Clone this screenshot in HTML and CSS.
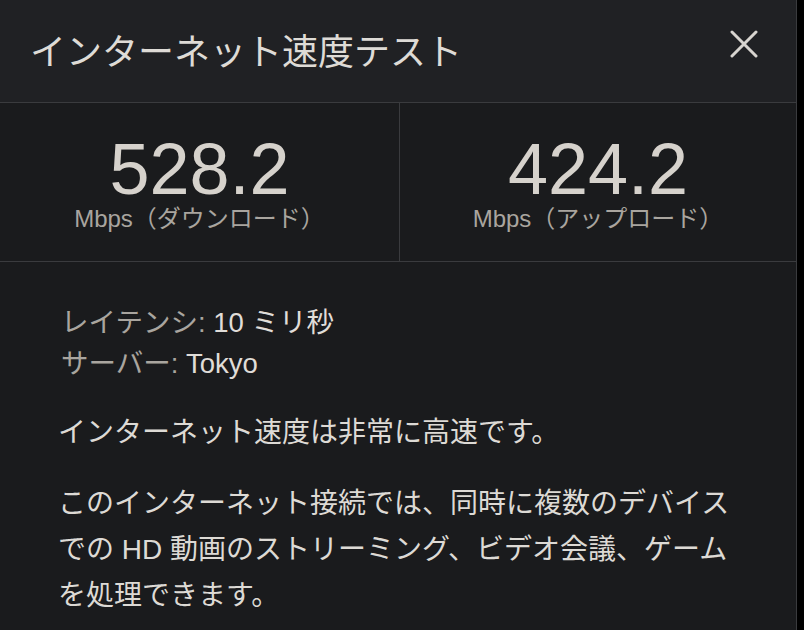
FILE: index.html
```html
<!DOCTYPE html>
<html lang="ja">
<head>
<meta charset="utf-8">
<title>インターネット速度テスト</title>
<link rel="stylesheet" href="styles.css">
</head>
<body>
<div class="panel">
  <header class="header">
    <h1 class="title">インターネット速度テスト</h1>
    <button class="close" aria-label="閉じる">
      <svg width="28" height="28" viewBox="0 0 28 28"><path d="M2 2 L26 26 M26 2 L2 26" stroke="currentColor" stroke-width="3" stroke-linecap="round"/></svg>
    </button>
  </header>
  <section class="stats">
    <div class="stat">
      <div class="value">528.2</div>
      <div class="unit">Mbps（ダウンロード）</div>
    </div>
    <div class="stat">
      <div class="value">424.2</div>
      <div class="unit">Mbps（アップロード）</div>
    </div>
  </section>
  <section class="details">
    <div class="info">
      <div class="row"><span class="key">レイテンシ:</span> <span class="val">10 ミリ秒</span></div>
      <div class="row"><span class="key">サーバー:</span> <span class="val">Tokyo</span></div>
    </div>
    <p class="text">インターネット速度は非常に高速です。</p>
    <p class="text">このインターネット接続では、同時に複数のデバイスでの HD 動画のストリーミング、ビデオ会議、ゲームを処理できます。</p>
  </section>
</div>
</body>
</html>
```
FILE: styles.css
```css
html, body {
  margin: 0;
  padding: 0;
  background: #000;
  height: 100%;
}
body {
  font-family: "Liberation Sans", "Noto Sans CJK JP", sans-serif;
  overflow: hidden;
}
.panel {
  width: 796px;
  height: 630px;
  background: #1a1b1d;
  border-right: 1px solid #3a3b3e;
}
.header {
  height: 102px;
  background: #202124;
  border-bottom: 1px solid #3a3b3e;
  display: flex;
  align-items: center;
  justify-content: space-between;
  padding: 0 38px 0 30px;
}
.title {
  margin: 0 0 4px;
  font-family: "Noto Sans CJK JP", sans-serif;
  font-weight: 400;
  font-size: 36px;
  line-height: 44px;
  color: #dedbd6;
}
.close {
  background: none;
  border: 0;
  padding: 0;
  color: #d8d5d0;
  display: flex;
  margin-top: -14px;
}
.stats {
  display: grid;
  grid-template-columns: 399px 1fr;
  border-bottom: 1px solid #3a3b3e;
}
.stat {
  padding: 30px 0 30px;
  text-align: center;
}
.stat + .stat {
  border-left: 1px solid #3a3b3e;
}
.value {
  font-size: 72px;
  line-height: 72px;
  color: #d6d2cc;
}
.unit {
  margin-top: 2px;
  font-size: 24px;
  line-height: 24px;
  color: #a9a59f;
}
.details {
  padding: 40px 56px 0 58px;
}
.info {
  font-size: 27.5px;
  line-height: 41px;
  margin-left: 3px;
}
.key {
  color: #a9a59f;
}
.val {
  color: #e0ddd8;
}
.text {
  margin: 26px 0 0;
  font-size: 28px;
  line-height: 46px;
  color: #dddad5;
}
.text + .text {
  margin-top: 25px;
}
```
